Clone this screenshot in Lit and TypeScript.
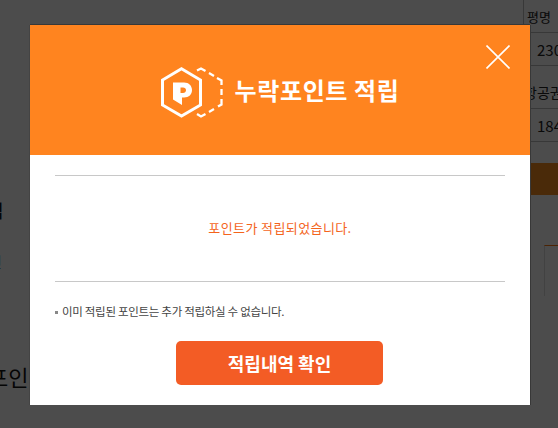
import { LitElement, html, css } from "lit";
import { customElement } from "lit/decorators.js";

@customElement("app-root")
export class AppRoot extends LitElement {
  static styles = css`
    :host {
      display: block;
      width: 558px;
      height: 428px;
      position: relative;
      overflow: hidden;
      font-family: "Noto Sans CJK KR", "Noto Sans", sans-serif;
      background: #fff;
      color: #222;
    }
    .page {
      display: flex;
      justify-content: space-between;
      height: 428px;
    }
    .left {
      width: 29px;
      overflow: hidden;
      display: flex;
      flex-direction: column;
      white-space: nowrap;
    }
    .l1 { margin: 198px 0 0 -13px; font-size: 18px; line-height: 24px; color: #112; font-weight: 500; }
    .l2 { margin: 30px 0 0 -12px; font-size: 15px; line-height: 20px; color: #1a5aa0; }
    .l3 { margin: 89px 0 0 -12px; font-size: 22px; line-height: 30px; color: #111; }
    .right {
      width: 35px;
      overflow: hidden;
      display: flex;
      flex-direction: column;
    }
    .cell {
      border-left: 1px solid #bbb;
      border-bottom: 1px solid #bbb;
      font-size: 13px;
      white-space: nowrap;
      display: flex;
      align-items: center;
      overflow: hidden;
      flex: none;
    }
    .c1 { height: 32px; padding-left: 3px; }
    .c2 { height: 32px; font-size: 15px; padding-left: 13px; }
    .c3 { height: 32px; font-size: 14px; padding-top: 10px; }
    .c4 { height: 32px; font-size: 15px; padding-left: 13px; }
    .gap { height: 21px; flex: none; }
    .bar { height: 32px; flex: none; background: #f88d20; }
    .rule {
      margin: 50px 0 0 21px;
      height: 50px;
      flex: none;
      border-top: 1px solid #ff7a10;
      border-left: 1px solid #ddd;
    }
    .overlay {
      position: absolute;
      inset: 0;
      background: rgba(0, 0, 0, 0.7);
    }
    .modal {
      position: absolute;
      left: 30px;
      top: 25px;
      width: 500px;
      height: 380px;
      background: #fff;
      box-shadow: 0 -1px 0 #383838, 1px 0 0 #383838, -1px 0 0 #444;
      display: flex;
      flex-direction: column;
    }
    .head {
      height: 130px;
      flex: none;
      background: #ff841f;
      position: relative;
      display: flex;
      align-items: center;
      justify-content: center;
      gap: 8px;
      color: #fff;
    }
    .logo { display: block; overflow: visible; }
    .title {
      font-size: 24px;
      font-weight: 700;
      line-height: 30px;
      letter-spacing: 0.6px;
      white-space: nowrap;
    }
    .close {
      position: absolute;
      right: 20px;
      top: 20px;
      width: 24px;
      height: 24px;
      display: block;
    }
    .body {
      flex: 1;
      padding: 20px 25px 0;
      display: flex;
      flex-direction: column;
    }
    .msg {
      height: 103px;
      padding-bottom: 2px;
      border-top: 1px solid #c8c8c8;
      border-bottom: 1px solid #c8c8c8;
      display: flex;
      align-items: center;
      justify-content: center;
      color: #f4641c;
      font-size: 13px;
      letter-spacing: 0.4px;
    }
    .note {
      margin-top: 21px;
      font-size: 11.5px;
      line-height: 16px;
      color: #444;
      letter-spacing: -0.3px;
      display: flex;
      align-items: center;
      gap: 4px;
      white-space: nowrap;
    }
    .note i {
      width: 3px;
      height: 3px;
      background: #888;
      display: block;
      margin-top: 2px;
    }
    .btn {
      align-self: flex-start;
      margin: 22px 0 0 121px;
      width: 207px;
      height: 44px;
      border-radius: 5px;
      border: none;
      background: #f35c25;
      color: #fff;
      font: 700 18px/44px "Noto Sans CJK KR", "Noto Sans", sans-serif;
      padding: 0;
    }
  `;

  render() {
    return html`
      <div class="page">
        <div class="left">
          <div class="l1">립</div>
          <div class="l2">인</div>
          <div class="l3">포인</div>
        </div>
        <div class="right">
          <div class="cell c1">평명</div>
          <div class="cell c2">230</div>
          <div class="cell c3">항공권</div>
          <div class="cell c4">184</div>
          <div class="gap"></div>
          <div class="bar"></div>
          <div class="rule"></div>
        </div>
      </div>
      <div class="overlay"></div>
      <div class="modal">
        <div class="head">
          <svg class="logo" width="66" height="54" viewBox="2 -2 66 54" fill="none" stroke="#fff" stroke-width="3">
            <path d="M22.500 3.800 L41.500 15 V40 L22.500 51 L3.500 40 V15 Z" />
            <path d="M38 5.500 L42 3.500 L46.500 6 M50 8 L55 11 M58 13 L62.500 15.500 V20 M62.500 24 V30 M62.500 34 V39.500 L59 41.500 M55 44 L50 47 M46.500 49 L42 51.500 L38 49" stroke-width="2.300" />
            <path fill="#fff" stroke="none" fill-rule="evenodd" d="M14 17.500 H25 C30 17.500 33 21 33 25 C33 29.500 30 32.500 25 32.500 H23 V40 L14 34.500 Z M21.500 22.500 V28 H24 C25.800 28 27 26.800 27 25.200 C27 23.600 25.800 22.500 24 22.500 Z" />
          </svg>
          <span class="title">누락포인트 적립</span>
          <svg class="close" viewBox="0 0 24 24" stroke="#fff" stroke-width="1.600" fill="none">
            <path d="M0.500 0.500 L23.500 23.500 M23.500 0.500 L0.500 23.500" />
          </svg>
        </div>
        <div class="body">
          <div class="msg">포인트가 적립되었습니다.</div>
          <div class="note"><i></i>이미 적립된 포인트는 추가 적립하실 수 없습니다.</div>
          <button class="btn">적립내역 확인</button>
        </div>
      </div>
    `;
  }
}
